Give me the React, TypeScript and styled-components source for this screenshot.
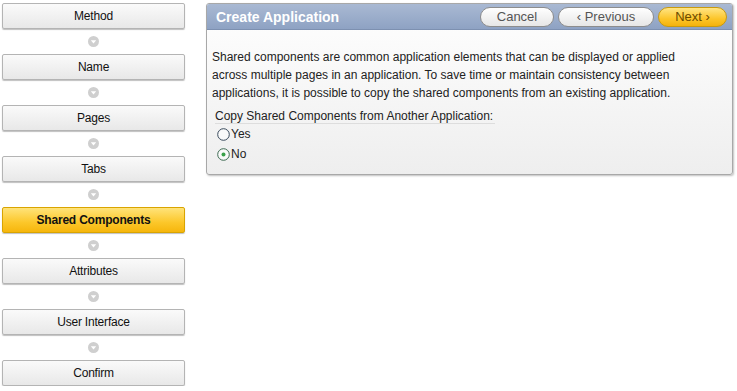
import styled, { createGlobalStyle } from "styled-components";

const GlobalStyle = createGlobalStyle`
  body {
    margin: 0;
    background: #ffffff;
    font-family: "Liberation Sans", Arial, sans-serif;
    font-size: 12px;
    color: #222;
  }
`;

const Page = styled.div`
  display: flex;
  align-items: flex-start;
  gap: 21px;
  padding: 3px 4px 0 2px;
`;

const Steps = styled.ol`
  list-style: none;
  margin: 0;
  padding: 0;
  width: 183px;
  display: flex;
  flex-direction: column;
`;

const Step = styled.li<{ $active?: boolean }>`
  height: 24px;
  border: 1px solid ${(p) => (p.$active ? "#d9a400" : "#b4b4b4")};
  border-radius: 2px;
  background: ${(p) =>
    p.$active
      ? "linear-gradient(#ffe37a, #fcc72a 60%, #f6b60c)"
      : "linear-gradient(#fafafa, #e8e8e8)"};
  box-shadow: 0 1px 1px rgba(0, 0, 0, 0.25);
  display: flex;
  align-items: center;
  justify-content: center;
  font-weight: ${(p) => (p.$active ? "bold" : "normal")};
  color: #111;
  font-size: 12px;
  letter-spacing: -0.2px;
`;

const Connector = styled.div`
  height: 25px;
  display: flex;
  align-items: center;
  justify-content: center;
`;

const Panel = styled.section`
  flex: 1;
  border: 1px solid #a8a8a8;
  border-radius: 3px;
  background: linear-gradient(#ffffff, #eeeeee);
  box-shadow: 1px 1px 2px rgba(0, 0, 0, 0.25);
  overflow: hidden;
`;

const PanelHeader = styled.header`
  height: 25px;
  display: flex;
  align-items: center;
  justify-content: space-between;
  padding: 0 5px 0 9px;
  background: linear-gradient(#a9b9d3, #8ea2c3);
  border-bottom: 1px solid #7d90b0;
`;

const Title = styled.h1`
  margin: 0;
  font-size: 14px;
  font-weight: bold;
  color: #fff;
`;

const Buttons = styled.div`
  display: flex;
  gap: 4px;
`;

const Button = styled.button<{ $primary?: boolean; $w: number }>`
  width: ${(p) => p.$w}px;
  height: 20px;
  border-radius: 10px;
  border: 1px solid ${(p) => (p.$primary ? "#c89a10" : "#8d8d8d")};
  background: ${(p) =>
    p.$primary
      ? "linear-gradient(#ffe584, #fcc52a 60%, #f4b20c)"
      : "linear-gradient(#ffffff, #e6e6e6)"};
  font-family: "Liberation Sans", Arial, sans-serif;
  font-size: 13px;
  color: ${(p) => (p.$primary ? "#6b4a00" : "#555")};
  padding: 0;
  display: flex;
  align-items: center;
  justify-content: center;
  gap: 2px;
`;

const Body = styled.div`
  padding: 18px 6px 10px 5px;
`;

const Intro = styled.p`
  margin: 0 0 7px;
  line-height: 18px;
  font-size: 12px;
  color: #222;
`;

const Field = styled.div`
  padding: 0 0 0 3px;
`;

const Label = styled.div`
  display: inline-block;
  padding: 0 2px 0 0;
  font-size: 12px;
  border-bottom: 1px solid #dddddd;
  line-height: 14px;
`;

const Option = styled.label`
  display: flex;
  align-items: center;
  height: 20px;
  gap: 1px;
  padding-left: 2px;
  font-size: 12px;
  color: #222;
`;

function Arrow() {
  return (
    <svg width="11" height="11" viewBox="0 0 11 11">
      <circle cx="5.5" cy="5.5" r="5.5" fill="#cfcfcf" />
      <path d="M2.8 4.3 L8.2 4.3 L5.5 7.4 Z" fill="#fff" />
    </svg>
  );
}

function Radio({ checked }: { checked?: boolean }) {
  return (
    <svg width="13" height="13" viewBox="0 0 13 13">
      <circle cx="6.5" cy="6.5" r="5.8" fill="#fafafa" stroke={checked ? "#3d6a52" : "#394a5c"} strokeWidth="1" />
      {checked && <circle cx="6.5" cy="6.5" r="2" fill="#3aa14a" />}
    </svg>
  );
}

const steps = [
  "Method",
  "Name",
  "Pages",
  "Tabs",
  "Shared Components",
  "Attributes",
  "User Interface",
  "Confirm",
];

export default function App() {
  return (
    <>
      <GlobalStyle />
      <Page>
        <Steps>
          {steps.map((s, i) => (
            <div key={s}>
              {i > 0 && (
                <Connector>
                  <Arrow />
                </Connector>
              )}
              <Step $active={s === "Shared Components"}>{s}</Step>
            </div>
          ))}
        </Steps>
        <Panel>
          <PanelHeader>
            <Title>Create Application</Title>
            <Buttons>
              <Button $w={74}>Cancel</Button>
              <Button $w={96}>‹ Previous</Button>
              <Button $w={69} $primary>
                Next ›
              </Button>
            </Buttons>
          </PanelHeader>
          <Body>
            <Intro>
              Shared components are common application elements that can be displayed or applied
              <br />
              across multiple pages in an application. To save time or maintain consistency between
              <br />
              applications, it is possible to copy the shared components from an existing application.
            </Intro>
            <Field>
              <Label>Copy Shared Components from Another Application:</Label>
              <Option>
                <Radio />
                Yes
              </Option>
              <Option>
                <Radio checked />
                No
              </Option>
            </Field>
          </Body>
        </Panel>
      </Page>
    </>
  );
}
